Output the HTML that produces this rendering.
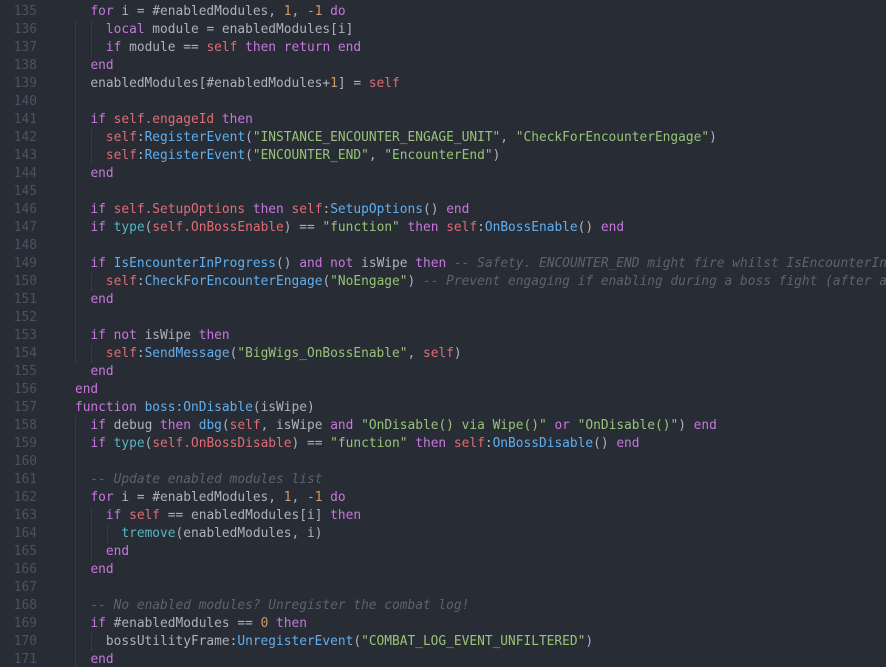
<!DOCTYPE html>
<html><head><meta charset="utf-8"><style>
html,body{margin:0;padding:0;background:#282c34;width:886px;height:667px;overflow:hidden}
#ed{position:relative;top:2px;width:886px;height:665px;overflow:hidden;font-family:"DejaVu Sans Mono","Liberation Mono",monospace;font-size:12.85px;color:#abb2bf}
.ln{position:absolute;left:0;width:37px;text-align:right;color:#4b5263;height:18px;line-height:18px}
.cd{position:absolute;left:59.5px;white-space:pre;height:18px;line-height:18px}
.k{color:#c678dd}.s{color:#e06c75}.g{color:#98c379}.f{color:#61afef}.c{color:#56b6c2}.n{color:#d19a66}.m{color:#5c6370;font-style:italic}
.gd{position:absolute;width:1px;background:#353a43}
</style></head><body><div id="ed">
<div class="gd" style="left:75px;top:19px;height:342px"></div>
<div class="gd" style="left:75px;top:415px;height:252px"></div>
<div class="gd" style="left:91px;top:19px;height:36px"></div>
<div class="gd" style="left:91px;top:127px;height:36px"></div>
<div class="gd" style="left:91px;top:271px;height:18px"></div>
<div class="gd" style="left:91px;top:343px;height:18px"></div>
<div class="gd" style="left:91px;top:505px;height:54px"></div>
<div class="gd" style="left:107px;top:523px;height:18px"></div>
<div class="gd" style="left:91px;top:631px;height:18px"></div>
<div class="ln" style="top:1px">135</div><div class="cd" style="top:1px">    <span class="k">for</span> i = #enabledModules, <span class="n">1</span>, <span class="n">-1</span> <span class="k">do</span></div>
<div class="ln" style="top:19px">136</div><div class="cd" style="top:19px">      <span class="k">local</span> module = enabledModules[i]</div>
<div class="ln" style="top:37px">137</div><div class="cd" style="top:37px">      <span class="k">if</span> module == <span class="s">self</span> <span class="k">then</span> <span class="k">return</span> <span class="k">end</span></div>
<div class="ln" style="top:55px">138</div><div class="cd" style="top:55px">    <span class="k">end</span></div>
<div class="ln" style="top:73px">139</div><div class="cd" style="top:73px">    enabledModules[#enabledModules+<span class="n">1</span>] = <span class="s">self</span></div>
<div class="ln" style="top:91px">140</div>
<div class="ln" style="top:109px">141</div><div class="cd" style="top:109px">    <span class="k">if</span> <span class="s">self.engageId</span> <span class="k">then</span></div>
<div class="ln" style="top:127px">142</div><div class="cd" style="top:127px">      <span class="s">self</span>:<span class="f">RegisterEvent</span>(<span class="g">"INSTANCE_ENCOUNTER_ENGAGE_UNIT"</span>, <span class="g">"CheckForEncounterEngage"</span>)</div>
<div class="ln" style="top:145px">143</div><div class="cd" style="top:145px">      <span class="s">self</span>:<span class="f">RegisterEvent</span>(<span class="g">"ENCOUNTER_END"</span>, <span class="g">"EncounterEnd"</span>)</div>
<div class="ln" style="top:163px">144</div><div class="cd" style="top:163px">    <span class="k">end</span></div>
<div class="ln" style="top:181px">145</div>
<div class="ln" style="top:199px">146</div><div class="cd" style="top:199px">    <span class="k">if</span> <span class="s">self.SetupOptions</span> <span class="k">then</span> <span class="s">self</span>:<span class="f">SetupOptions</span>() <span class="k">end</span></div>
<div class="ln" style="top:217px">147</div><div class="cd" style="top:217px">    <span class="k">if</span> <span class="c">type</span>(<span class="s">self.OnBossEnable</span>) == <span class="g">"function"</span> <span class="k">then</span> <span class="s">self</span>:<span class="f">OnBossEnable</span>() <span class="k">end</span></div>
<div class="ln" style="top:235px">148</div>
<div class="ln" style="top:253px">149</div><div class="cd" style="top:253px">    <span class="k">if</span> <span class="f">IsEncounterInProgress</span>() <span class="k">and</span> <span class="k">not</span> isWipe <span class="k">then</span> <span class="m">-- Safety. ENCOUNTER_END might fire whilst IsEncounterIn</span></div>
<div class="ln" style="top:271px">150</div><div class="cd" style="top:271px">      <span class="s">self</span>:<span class="f">CheckForEncounterEngage</span>(<span class="g">"NoEngage"</span>) <span class="m">-- Prevent engaging if enabling during a boss fight (after a</span></div>
<div class="ln" style="top:289px">151</div><div class="cd" style="top:289px">    <span class="k">end</span></div>
<div class="ln" style="top:307px">152</div>
<div class="ln" style="top:325px">153</div><div class="cd" style="top:325px">    <span class="k">if</span> <span class="k">not</span> isWipe <span class="k">then</span></div>
<div class="ln" style="top:343px">154</div><div class="cd" style="top:343px">      <span class="s">self</span>:<span class="f">SendMessage</span>(<span class="g">"BigWigs_OnBossEnable"</span>, <span class="s">self</span>)</div>
<div class="ln" style="top:361px">155</div><div class="cd" style="top:361px">    <span class="k">end</span></div>
<div class="ln" style="top:379px">156</div><div class="cd" style="top:379px">  <span class="k">end</span></div>
<div class="ln" style="top:397px">157</div><div class="cd" style="top:397px">  <span class="k">function</span> <span class="f">boss:OnDisable</span>(isWipe)</div>
<div class="ln" style="top:415px">158</div><div class="cd" style="top:415px">    <span class="k">if</span> debug <span class="k">then</span> <span class="f">dbg</span>(<span class="s">self</span>, isWipe <span class="k">and</span> <span class="g">"OnDisable() via Wipe()"</span> <span class="k">or</span> <span class="g">"OnDisable()"</span>) <span class="k">end</span></div>
<div class="ln" style="top:433px">159</div><div class="cd" style="top:433px">    <span class="k">if</span> <span class="c">type</span>(<span class="s">self.OnBossDisable</span>) == <span class="g">"function"</span> <span class="k">then</span> <span class="s">self</span>:<span class="f">OnBossDisable</span>() <span class="k">end</span></div>
<div class="ln" style="top:451px">160</div>
<div class="ln" style="top:469px">161</div><div class="cd" style="top:469px">    <span class="m">-- Update enabled modules list</span></div>
<div class="ln" style="top:487px">162</div><div class="cd" style="top:487px">    <span class="k">for</span> i = #enabledModules, <span class="n">1</span>, <span class="n">-1</span> <span class="k">do</span></div>
<div class="ln" style="top:505px">163</div><div class="cd" style="top:505px">      <span class="k">if</span> <span class="s">self</span> == enabledModules[i] <span class="k">then</span></div>
<div class="ln" style="top:523px">164</div><div class="cd" style="top:523px">        <span class="c">tremove</span>(enabledModules, i)</div>
<div class="ln" style="top:541px">165</div><div class="cd" style="top:541px">      <span class="k">end</span></div>
<div class="ln" style="top:559px">166</div><div class="cd" style="top:559px">    <span class="k">end</span></div>
<div class="ln" style="top:577px">167</div>
<div class="ln" style="top:595px">168</div><div class="cd" style="top:595px">    <span class="m">-- No enabled modules? Unregister the combat log!</span></div>
<div class="ln" style="top:613px">169</div><div class="cd" style="top:613px">    <span class="k">if</span> #enabledModules == <span class="n">0</span> <span class="k">then</span></div>
<div class="ln" style="top:631px">170</div><div class="cd" style="top:631px">      bossUtilityFrame:<span class="f">UnregisterEvent</span>(<span class="g">"COMBAT_LOG_EVENT_UNFILTERED"</span>)</div>
<div class="ln" style="top:649px">171</div><div class="cd" style="top:649px">    <span class="k">end</span></div>
</div></body></html>
